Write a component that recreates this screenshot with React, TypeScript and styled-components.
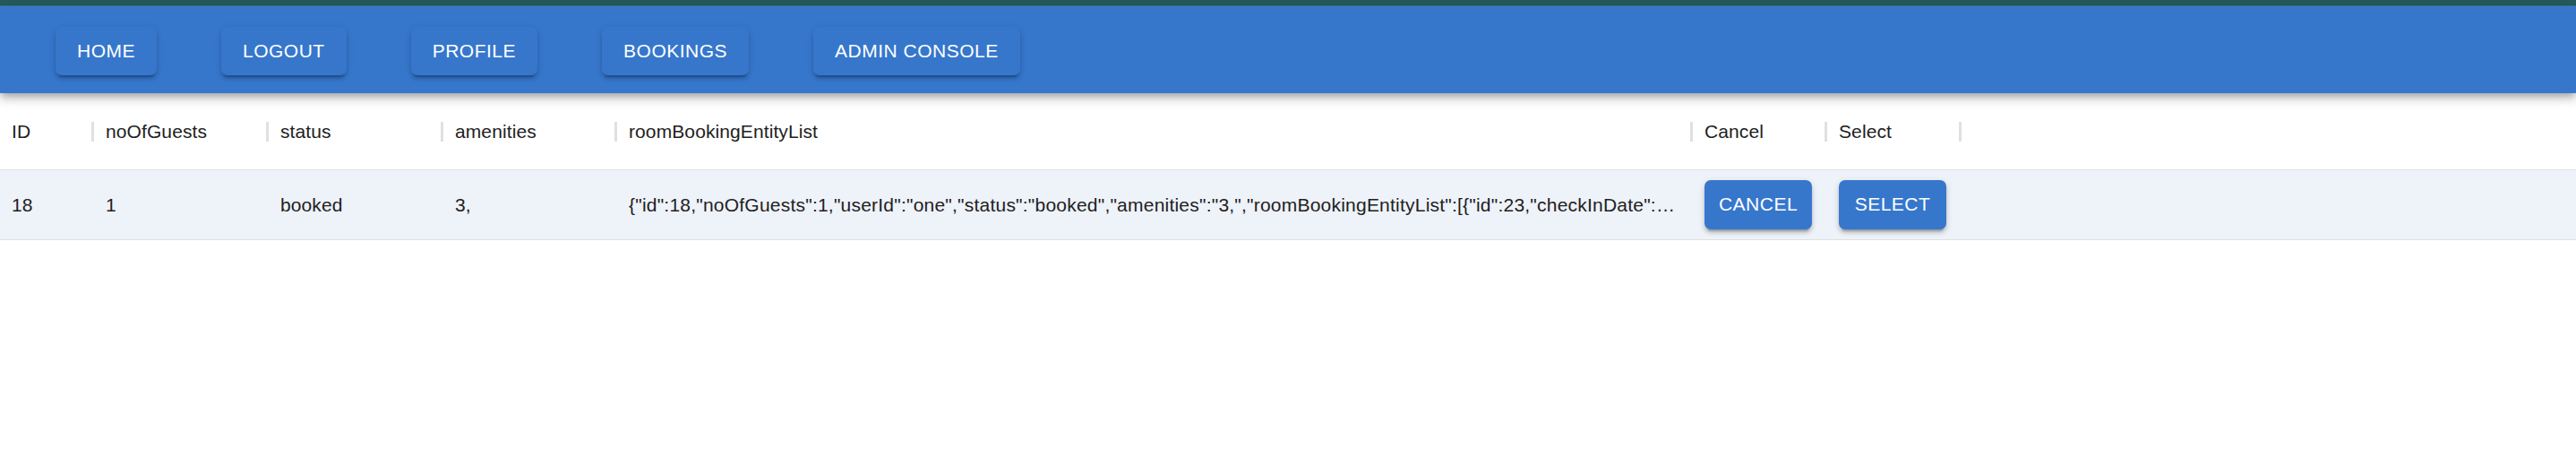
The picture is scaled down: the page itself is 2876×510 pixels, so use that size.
import React from "react";
import styled, { createGlobalStyle } from "styled-components";

const GlobalStyle = createGlobalStyle`
  html, body {
    margin: 0;
    padding: 0;
    background: #ffffff;
    font-family: "Liberation Sans", Arial, Helvetica, sans-serif;
  }
`;

type Column = {
  field: string;
  title: string;
  width: number;
};

const columns: Column[] = [
  { field: "id", title: "ID", width: 104 },
  { field: "noOfGuests", title: "noOfGuests", width: 195 },
  { field: "status", title: "status", width: 195 },
  { field: "amenities", title: "amenities", width: 194 },
  { field: "roomBookingEntityList", title: "roomBookingEntityList", width: 1201 },
  { field: "cancel", title: "Cancel", width: 150 },
  { field: "select", title: "Select", width: 150 },
];

const booking = {
  id: 18,
  noOfGuests: 1,
  userId: "one",
  status: "booked",
  amenities: "3,",
  roomBookingEntityList: [
    {
      id: 23,
      checkInDate: "2023-04-12",
      checkOutDate: "2023-04-14",
      roomId: 4,
    },
  ],
};

const navItems = ["Home", "Logout", "Profile", "Bookings", "Admin Console"];

const App: React.FC = () => {
  const gridTemplate = columns.map((c) => `${c.width}px`).join(" ");

  return (
    <Root>
      <GlobalStyle />
      <TopStrip />
      <NavBar>
        {navItems.map((item) => (
          <NavButton key={item}>{item}</NavButton>
        ))}
      </NavBar>
      <Table>
        <HeaderRow cols={gridTemplate}>
          {columns.map((c, i) => (
            <HeaderCell key={c.field} first={i === 0}>
              <span>{c.title}</span>
              <Separator />
            </HeaderCell>
          ))}
        </HeaderRow>
        <BodyRow cols={gridTemplate}>
          <Cell first>{booking.id}</Cell>
          <Cell>{booking.noOfGuests}</Cell>
          <Cell>{booking.status}</Cell>
          <Cell>{booking.amenities}</Cell>
          <Cell>
            <Ellipsis>{JSON.stringify(booking)}</Ellipsis>
          </Cell>
          <Cell>
            <RowButton>Cancel</RowButton>
          </Cell>
          <Cell>
            <RowButton>Select</RowButton>
          </Cell>
        </BodyRow>
      </Table>
    </Root>
  );
};

export default App;

const Root = styled.div`
  width: 100%;
  min-height: 510px;
  background: #ffffff;
`;

const TopStrip = styled.div`
  height: 6px;
  background-color: #245a5e;
  border-bottom: 1px solid #3f7684;
`;

const NavBar = styled.div`
  position: relative;
  z-index: 2;
  height: 97px;
  display: flex;
  align-items: center;
  gap: 72px;
  padding-left: 62px;
  background-color: #3677cc;
  box-shadow: 0 4px 7px -2px rgba(0, 0, 0, 0.2), 0 7px 9px 0 rgba(0, 0, 0, 0.14),
    0 2px 18px 0 rgba(0, 0, 0, 0.12);
`;

const NavButton = styled.div`
  height: 54px;
  display: flex;
  align-items: center;
  padding: 0 24px;
  margin-top: 2px;
  background-color: #3677cc;
  color: #ffffff;
  font-size: 21px;
  letter-spacing: 0.5px;
  text-transform: uppercase;
  border-radius: 7px;
  box-shadow: 0 5px 2px -3px rgba(0, 0, 0, 0.2), 0 4px 4px 0 rgba(0, 0, 0, 0.14),
    0 2px 9px 0 rgba(0, 0, 0, 0.12);
`;

const Table = styled.div`
  display: flex;
  flex-direction: column;
  color: #212121;
  font-size: 21px;
  letter-spacing: 0.1px;
`;

const HeaderRow = styled.div<{ cols: string }>`
  display: grid;
  grid-template-columns: ${({ cols }) => cols};
  height: 85px;
  border-bottom: 1px solid #e0e0e0;
`;

const HeaderCell = styled.div<{ first?: boolean }>`
  display: flex;
  align-items: center;
  justify-content: space-between;
  padding-left: ${({ first }) => (first ? "13px" : "14px")};
  margin-right: -1px;
  margin-top: 1px;
`;

const Separator = styled.div`
  width: 3px;
  height: 22px;
  background-color: #e0e0e0;
`;

const BodyRow = styled.div<{ cols: string }>`
  display: grid;
  grid-template-columns: ${({ cols }) => cols};
  height: 77px;
  background-color: #eef2f9;
  border-bottom: 1px solid #e0e0e0;
`;

const Cell = styled.div<{ first?: boolean }>`
  display: flex;
  align-items: center;
  min-width: 0;
  padding: 0 14px 0 ${({ first }) => (first ? "13px" : "14px")};
`;

const Ellipsis = styled.div`
  white-space: nowrap;
  overflow: hidden;
  text-overflow: ellipsis;
  letter-spacing: 0.22px;
`;

const RowButton = styled.div`
  width: 120px;
  height: 55px;
  display: flex;
  align-items: center;
  justify-content: center;
  margin-top: -1px;
  background-color: #3677cc;
  color: #ffffff;
  font-size: 21px;
  letter-spacing: 0.5px;
  text-transform: uppercase;
  border-radius: 7px;
  box-shadow: 0 5px 2px -3px rgba(0, 0, 0, 0.2), 0 4px 4px 0 rgba(0, 0, 0, 0.14),
    0 2px 9px 0 rgba(0, 0, 0, 0.12);
`;
